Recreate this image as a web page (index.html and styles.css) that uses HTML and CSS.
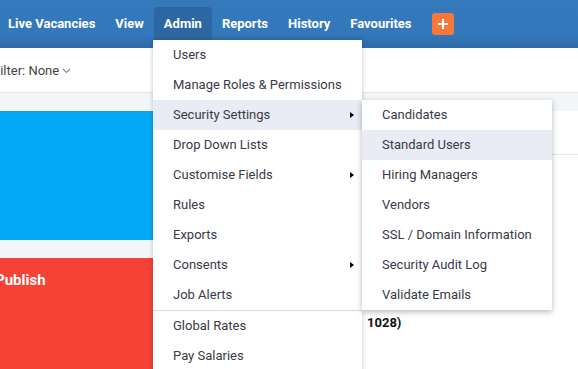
FILE: index.html
```html
<!DOCTYPE html>
<html>
<head>
<meta charset="utf-8">
<link rel="stylesheet" href="styles.css">
</head>
<body>
<header class="nav">
  <div class="nav-item first">Live Vacancies</div>
  <div class="nav-item">View</div>
  <div class="nav-item active">Admin</div>
  <div class="nav-item">Reports</div>
  <div class="nav-item">History</div>
  <div class="nav-item">Favourites</div>
  <div class="plus-btn"><svg width="12" height="12" viewBox="0 0 12 12"><path d="M6 1v10M1 6h10" stroke="#fff" stroke-width="2" fill="none"/></svg></div>
</header>
<div class="filter-bar">
  <span class="filter-text">Filter: None</span>
  <svg class="chev" width="9" height="6" viewBox="0 0 9 6"><path d="M1 1l3.5 3.5L8 1" stroke="#8a8f96" stroke-width="1.2" fill="none"/></svg>
</div>
<main class="content">
  <section class="left-col">
    <div class="card blue"></div>
    <div class="card red"><span class="card-title">Publish</span></div>
  </section>
  <section class="right-panel">
    <div class="panel-head"></div>
    <div class="panel-body"><span class="count">1028)</span></div>
  </section>
</main>

<ul class="menu main-menu">
  <li class="mi">Users</li>
  <li class="mi">Manage Roles &amp; Permissions</li>
  <li class="mi hl">Security Settings<span class="arrow"></span></li>
  <li class="mi">Drop Down Lists</li>
  <li class="mi">Customise Fields<span class="arrow"></span></li>
  <li class="mi">Rules</li>
  <li class="mi">Exports</li>
  <li class="mi">Consents<span class="arrow"></span></li>
  <li class="mi">Job Alerts</li>
  <li class="divider"></li>
  <li class="mi">Global Rates</li>
  <li class="mi">Pay Salaries</li>
</ul>
<ul class="menu sub-menu">
  <li class="mi">Candidates</li>
  <li class="mi hl">Standard Users</li>
  <li class="mi">Hiring Managers</li>
  <li class="mi">Vendors</li>
  <li class="mi">SSL / Domain Information</li>
  <li class="mi">Security Audit Log</li>
  <li class="mi">Validate Emails</li>
</ul>
</body>
</html>
```
FILE: styles.css
```css
* { box-sizing: border-box; }
html, body { margin: 0; padding: 0; }
body {
  font-family: Roboto, "Liberation Sans", Arial, sans-serif;
  font-size: 13px;
  background: #f3f6f9;
  width: 578px;
  height: 369px;
  overflow: hidden;
  position: relative;
}
.nav {
  height: 48px;
  background: linear-gradient(#3579bd 0%, #3478bc 70%, #2e6aa8 100%);
  display: flex;
  align-items: flex-start;
  color: #fff;
}
.nav-item {
  margin-top: 7px;
  height: 33px;
  line-height: 33px;
  padding: 0 10px;
  font-weight: 700;
  font-size: 13px;
  border-radius: 4px 4px 0 0;
}
.nav-item.first { padding-left: 8px; }
.nav-item.active { background: #2d67a3; }
.plus-btn {
  margin-top: 13px;
  margin-left: 10px;
  width: 22px;
  height: 22px;
  border-radius: 3px;
  background: #f7783a;
  display: flex;
  align-items: center;
  justify-content: center;
}
.filter-bar {
  height: 45px;
  background: #fff;
  border-bottom: 1px solid #e3e7eb;
  display: flex;
  align-items: center;
  color: #444;
}
.filter-text { margin-left: -7px; }
.chev { margin-left: 3px; margin-top: 1px; }
.content {
  display: flex;
  padding-top: 18px;
  height: 276px;
}
.left-col {
  width: 355px;
  display: flex;
  flex-direction: column;
  gap: 18px;
}
.card { width: 100%; }
.card.blue { height: 129px; background: #03a9f4; }
.card.red {
  flex: 1;
  background: #f44336;
  padding-top: 13px;
}
.card-title {
  display: block;
  margin-left: -5px;
  color: #fff;
  font-weight: 700;
  font-size: 15px;
}
.right-panel {
  flex: 1;
  background: #fff;
}
.panel-head {
  height: 44px;
  border-bottom: 1px solid #e4e7ea;
}
.panel-body {
  padding: 160px 0 0 12px;
}
.count {
  font-weight: 700;
  color: #111;
  font-size: 13px;
}
.menu {
  list-style: none;
  margin: 0;
  padding: 0;
  background: #fff;
  position: absolute;
  color: #3a3a48;
}
.main-menu {
  left: 153px;
  top: 40px;
  width: 209px;
  height: 340px;
  box-shadow: 0 0 5px rgba(0,0,0,0.22);
}
.sub-menu {
  left: 362px;
  top: 100px;
  width: 190px;
  box-shadow: 0 2px 6px rgba(0,0,0,0.28);
}
.mi {
  height: 30px;
  display: flex;
  align-items: center;
  padding-left: 20px;
  padding-bottom: 2px;
}
.mi.hl { background: #e9ecf5; }
.divider { height: 1px; background: #dcdcdc; }
.arrow {
  margin-left: auto;
  margin-right: 8px;
  margin-top: 1px;
  width: 0;
  height: 0;
  border-left: 4px solid #000;
  border-top: 3.5px solid transparent;
  border-bottom: 3.5px solid transparent;
}
```
